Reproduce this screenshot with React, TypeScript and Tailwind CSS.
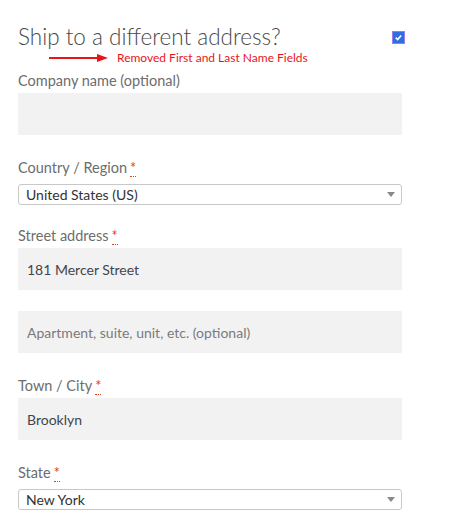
import React from 'react'

const font = { fontFamily: 'Lato, "Noto Sans", sans-serif' }

function Req() {
  return (
    <abbr className="text-[#e2401c] no-underline border-b border-dotted border-[#e2401c] ml-[3px] leading-none" title="required">
      *
    </abbr>
  )
}

function Label({ children, req }: { children: React.ReactNode; req?: boolean }) {
  return (
    <label className="block text-[14.5px] leading-[24px] text-[#6d6d6d]">
      {children}
      {req && <Req />}
    </label>
  )
}

function TextInput({ value, placeholder }: { value?: string; placeholder?: string }) {
  return (
    <div className="h-[42px] w-[384px] bg-[#f2f2f2] flex items-center px-[9px] text-[14px]">
      {value ? <span className="text-[#43454b]">{value}</span> : <span className="text-[#7a7a7a]">{placeholder}</span>}
    </div>
  )
}

function Select({ value }: { value: string }) {
  return (
    <div className="mt-[4px] mb-[-2px] h-[21px] w-[384px] bg-white border border-[#c8c8c8] rounded-[3px] flex items-center justify-between pl-[7px] pr-[6px] text-[14px] text-[#333]">
      <span>{value}</span>
      <svg width="8" height="5" viewBox="0 0 8 5">
        <path d="M0 0h8L4 5z" fill="#888" />
      </svg>
    </div>
  )
}

export default function App() {
  return (
    <div className="w-[474px] h-[529px] bg-white pl-[18px] pt-[20px]" style={font}>
      <div className="flex items-center w-[386px] justify-between">
        <h3 className="text-[22.5px] leading-[34px] text-[#484848] font-light">Ship to a different address?</h3>
        <div className="w-[13px] h-[13px] bg-[#2f6ee0] border border-[#9a7ee8] flex items-center justify-center mr-[-1px]">
          <svg width="9" height="9" viewBox="0 0 10 10">
            <path d="M2 5.2l2 2 4-4.4" stroke="white" strokeWidth="1.8" fill="none" />
          </svg>
        </div>
      </div>

      {/* annotation */}
      <div className="flex items-center h-[14px] -mt-[3px] mb-[4px]">
        <svg width="60" height="10" viewBox="0 0 60 10" className="ml-[31px]">
          <path d="M0 5h50" stroke="#e8141c" strokeWidth="2" />
          <path d="M48 1l11 4-11 4z" fill="#e8141c" />
        </svg>
        <span className="text-[12px] text-[#e8141c] ml-[8px] leading-none">Removed First and Last Name Fields</span>
      </div>

      <div className="flex flex-col gap-[21px]">
        <div>
          <Label>Company name (optional)</Label>
          <TextInput />
        </div>
        <div>
          <Label req>Country / Region</Label>
          <Select value="United States (US)" />
        </div>
        <div>
          <Label req>Street address</Label>
          <TextInput value="181 Mercer Street" />
        </div>
        <div>
          <TextInput placeholder="Apartment, suite, unit, etc. (optional)" />
        </div>
        <div>
          <Label req>Town / City</Label>
          <TextInput value="Brooklyn" />
        </div>
        <div>
          <Label req>State</Label>
          <Select value="New York" />
        </div>
      </div>
    </div>
  )
}
